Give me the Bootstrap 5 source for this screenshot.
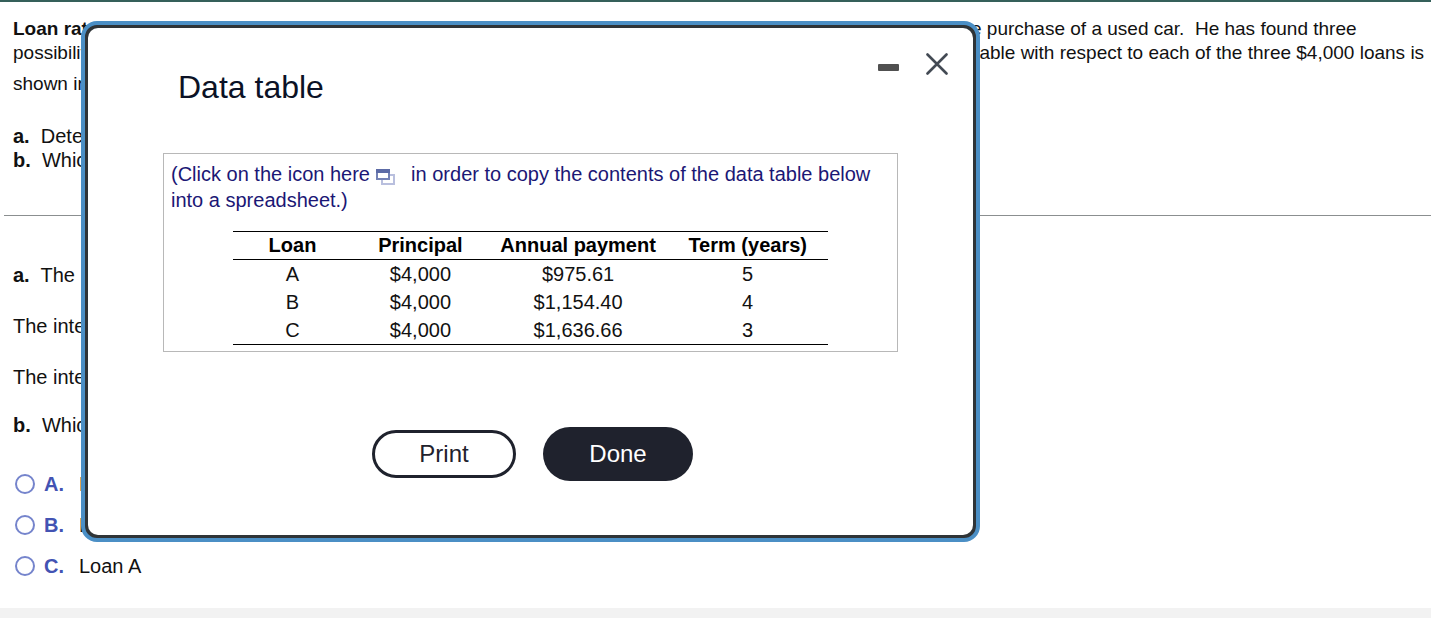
<!DOCTYPE html>
<html lang="en">
<head>
<meta charset="utf-8">
<meta name="viewport" content="width=device-width, initial-scale=1">
<title>Data table</title>
<link href="https://cdn.jsdelivr.net/npm/bootstrap@5.3.0/dist/css/bootstrap.min.css" rel="stylesheet">
<style>
  body { font-family: "Liberation Sans", Arial, sans-serif; font-size: 20px; line-height: 24px; color: #111; background: #fff; overflow-x: hidden; }
  .page { border-top: 2px solid #35605a; min-height: 100vh; }
  .intro { padding: 15px 0 0 13px; font-size: 19px; }
  .stem { flex: 0 0 958px; }
  .third-line { padding-top: 7px; }
  .tasks { margin-top: 28px; padding-left: 13px; }
  .rule { margin: 43px 0 0 4px; border-top: 1px solid #8b8f90; opacity: 1; }
  .answers { padding: 47px 0 0 13px; }
  .answers p { margin-bottom: 27px; }
  .choices { margin-top: 35px; gap: 17px; padding-left: 13px; }
  .choice input { appearance: none; width: 20px; height: 20px; margin: 0 9px 0 2px; border: 2px solid #7584cc; border-radius: 50%; background: #fff; }
  .choice b { color: #4353b3; width: 35px; }
  .foot-strip { height: 10px; background: #f2f2f2; }
  .dialog-box { top: 19px; left: 81px; width: 899px; border: 4px solid #4b8fc5; border-radius: 16px; background: #2f3437; padding: 3px; }
  .dialog-body { background: #fff; border-radius: 10px; padding: 25px 75px 54px; }
  .dialog-title { font-size: 32px; line-height: 36px; color: #0b1226; margin: 16px 0 0 15px; font-weight: 400; }
  .tools { gap: 27px; margin-right: -50px; }
  .tool { border: 0; padding: 0; background: transparent; line-height: 0; }
  .table-box { border: 1px solid #b8b8b8; margin-top: 48px; padding: 7px 8px 6px 7px; }
  .note { color: #1b1775; line-height: 26px; margin-bottom: 18px; }
  .note .tool { margin-right: 11px; vertical-align: -1px; }
  .loans { width: 595px; margin-left: 62px; text-align: center; border-top: 1px solid #000; border-bottom: 1px solid #000; border-collapse: separate; border-spacing: 0; table-layout: fixed; }
  .loans th { padding: 0; line-height: 27px; border-bottom: 1px solid #000; color: #000; }
  .loans td { padding: 0; line-height: 28px; }
  .actions { margin-top: 75px; gap: 27px; padding-left: 4px; }
  .pill { border-radius: 27px; font-size: 24px; line-height: 28px; padding: 0; }
  .print { width: 144px; height: 48px; border: 3px solid #1f222d; background: #fff; color: #1f222d; }
  .done { width: 150px; height: 54px; border: 0; background: #1f222d; color: #fff; }
</style>
</head>
<body>
<div class="page position-relative d-flex flex-column">
  <main class="flex-grow-1">
    <section class="intro">
      <div class="d-flex text-nowrap">
        <div class="stem"><b>Loan rat</b><br>possibilit<div class="third-line">shown in</div></div>
        <div>e purchase of a used car.&nbsp; He has found three<br>ilable with respect to each of the three $4,000 loans is</div>
      </div>
    </section>
    <section class="tasks">
      <div><b>a.</b>&nbsp; Dete</div>
      <div><b>b.</b>&nbsp; Whic</div>
    </section>
    <hr class="rule">
    <section class="answers">
      <p><b>a.</b>&nbsp; The</p>
      <p>The inte</p>
      <p class="mb-4">The inte</p>
      <div><b>b.</b>&nbsp; Whic</div>
    </section>
    <form class="choices d-flex flex-column pb-4">
      <label class="choice d-flex align-items-center"><input type="radio" name="loan"><b>A.</b>L</label>
      <label class="choice d-flex align-items-center"><input type="radio" name="loan"><b>B.</b>L</label>
      <label class="choice d-flex align-items-center"><input type="radio" name="loan"><b>C.</b>Loan A</label>
    </form>
  </main>
  <footer class="foot-strip"></footer>

  <div class="dialog-box position-absolute" role="dialog" aria-labelledby="dialogTitle">
    <div class="dialog-body">
      <div class="d-flex justify-content-between align-items-start">
        <h1 class="dialog-title" id="dialogTitle">Data table</h1>
        <div class="tools d-flex align-items-center">
          <button class="tool" type="button" aria-label="Minimize"><svg width="21" height="22"><rect y="11" width="21" height="7" rx="1" fill="#505050"/></svg></button>
          <button class="tool" type="button" aria-label="Close"><svg width="22" height="22" fill="none" stroke="#434a54" stroke-width="2.6" stroke-linecap="round"><path d="M1.5 1.5l19 19M20.5 1.5l-19 19"/></svg></button>
        </div>
      </div>
      <div class="table-box">
        <p class="note">(Click on the icon here <button class="tool" type="button" aria-label="Copy table"><svg width="19" height="16"><path d="M14 6h4v9H6v-4" fill="none" stroke="#b9bfde" stroke-width="2"/><rect x="1" y="1" width="12" height="9" fill="#fff" stroke="#7482b5" stroke-width="2"/><path d="M0 0h14v4H0z" fill="#5c6ba6"/></svg></button> in order to copy the contents of the data table below <span>into a spreadsheet.)</span></p>
        <table class="loans">
          <colgroup><col style="width:20%"><col style="width:23%"><col style="width:30%"><col style="width:27%"></colgroup>
          <thead><tr><th>Loan</th><th>Principal</th><th>Annual payment</th><th>Term (years)</th></tr></thead>
          <tbody>
            <tr><td>A</td><td>$4,000</td><td>$975.61</td><td>5</td></tr>
            <tr><td>B</td><td>$4,000</td><td>$1,154.40</td><td>4</td></tr>
            <tr><td>C</td><td>$4,000</td><td>$1,636.66</td><td>3</td></tr>
          </tbody>
        </table>
      </div>
      <div class="actions d-flex justify-content-center align-items-center">
        <button class="pill print" type="button">Print</button>
        <button class="pill done" type="button">Done</button>
      </div>
    </div>
  </div>
</div>
<script src="https://cdn.jsdelivr.net/npm/bootstrap@5.3.0/dist/js/bootstrap.bundle.min.js"></script>
</body>
</html>
